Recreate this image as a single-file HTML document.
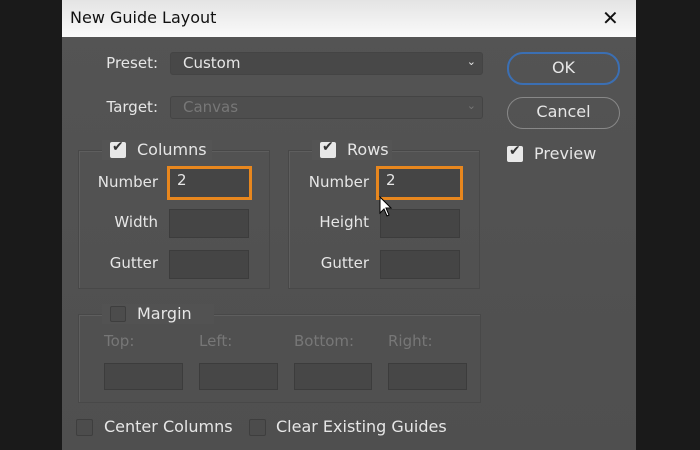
<!DOCTYPE html><html><head><style>
*{box-sizing:border-box}body{margin:0;width:700px;height:450px;background:#1a1a1a;position:relative;overflow:hidden;font-family:"DejaVu Sans","Liberation Sans",sans-serif;font-size:15px;color:#e6e6e6}
.a{position:absolute}
#dlg{left:62px;top:0;width:574px;height:450px;background:linear-gradient(#545454,#4f4f4f)}
#tb{left:62px;top:0;width:574px;height:37px;background:linear-gradient(#e4e4e4,#fafafa);color:#111;font-size:16px}
.lbl{text-align:right;width:120px}
.sel{background:#484848;border:1px solid #444;border-radius:3px;height:23px;padding:1px 12px}
.inp{background:#454545;border:1px solid #3c3c3c;width:80px;height:29px}
.or{border:3px solid #e8871e;padding:2px 7px}
.grp{border:1px solid #484848;box-shadow:inset 1px 1px 0 #5e5e5e}
.cb{width:16px;height:16px;border-radius:2px}
.on{background:#e8e8e8}
.off{border:1.5px solid #3e3e3e;background:#4c4c4c}
.btn{border-radius:16px;text-align:center;line-height:28px;font-size:16px}
.dim{color:#777}
</style></head><body>
<div id="dlg" class="a"></div>
<div id="tb" class="a"><span class="a" style="left:8px;top:8px">New Guide Layout</span><span class="a" style="left:540px;top:6px;font-size:20px">✕</span></div>

<div class="a lbl" style="left:38px;top:54px">Preset:</div>
<div class="a sel" style="left:170px;top:52px;width:313px">Custom<span class="a" style="right:6px;top:2px;font-size:11px">⌄</span></div>
<div class="a lbl" style="left:38px;top:98px">Target:</div>
<div class="a sel dim" style="left:170px;top:96px;width:313px;background:#4e4e4e">Canvas<span class="a" style="right:6px;top:2px;font-size:11px">⌄</span></div>

<div class="a btn" style="left:507px;top:52px;width:113px;height:33px;border:2.5px solid #3b6fb3">OK</div>
<div class="a btn" style="left:507px;top:97px;width:113px;height:32px;border:1.5px solid #888">Cancel</div>
<div class="a cb on" style="left:507px;top:146px"></div><span class="a" style="left:509px;top:143px;color:#333;font-size:14px">✔</span>
<span class="a" style="left:534px;top:144px;font-size:16px">Preview</span>

<div class="a grp" style="left:78px;top:150px;width:192px;height:139px"></div>
<div class="a" style="left:102px;top:140px;width:110px;height:20px;background:#545454"></div>
<div class="a cb on" style="left:110px;top:142px"></div><span class="a" style="left:112px;top:139px;color:#333;font-size:14px">✔</span>
<span class="a" style="left:137px;top:140px;font-size:16px">Columns</span>
<div class="a lbl" style="left:38px;top:173px">Number</div><div class="a inp or" style="left:167px;top:166px;width:85px;height:34px">2</div>
<div class="a lbl" style="left:38px;top:213px">Width</div><div class="a inp" style="left:169px;top:209px"></div>
<div class="a lbl" style="left:38px;top:254px">Gutter</div><div class="a inp" style="left:169px;top:250px"></div>

<div class="a grp" style="left:288px;top:150px;width:192px;height:139px"></div>
<div class="a" style="left:312px;top:140px;width:80px;height:20px;background:#545454"></div>
<div class="a cb on" style="left:320px;top:142px"></div><span class="a" style="left:322px;top:139px;color:#333;font-size:14px">✔</span>
<span class="a" style="left:347px;top:140px;font-size:16px">Rows</span>
<div class="a lbl" style="left:249px;top:173px">Number</div><div class="a inp or" style="left:376px;top:166px;width:87px;height:34px">2</div>
<div class="a lbl" style="left:249px;top:213px">Height</div><div class="a inp" style="left:380px;top:209px"></div>
<div class="a lbl" style="left:249px;top:254px">Gutter</div><div class="a inp" style="left:380px;top:250px"></div>
<svg class="a" style="left:379px;top:196px" width="14" height="22"><path d="M1 1 L1 17 L5 13 L8 20 L10 19 L7 12 L12 12 Z" fill="#fff" stroke="#000"/></svg>

<div class="a grp" style="left:78px;top:314px;width:403px;height:89px"></div>
<div class="a" style="left:102px;top:304px;width:112px;height:20px;background:#525252"></div>
<div class="a cb off" style="left:110px;top:306px"></div>
<span class="a" style="left:137px;top:304px;font-size:16px">Margin</span>
<span class="a dim" style="left:104px;top:332px">Top:</span><span class="a dim" style="left:199px;top:332px">Left:</span><span class="a dim" style="left:294px;top:332px">Bottom:</span><span class="a dim" style="left:388px;top:332px">Right:</span>
<div class="a inp" style="left:104px;top:363px;width:79px;height:27px;background:#474747"></div>
<div class="a inp" style="left:199px;top:363px;width:79px;height:27px;background:#474747"></div>
<div class="a inp" style="left:294px;top:363px;width:78px;height:27px;background:#474747"></div>
<div class="a inp" style="left:388px;top:363px;width:79px;height:27px;background:#474747"></div>

<div class="a cb off" style="left:76px;top:419px;width:17px;height:17px"></div>
<span class="a" style="left:104px;top:417px;font-size:16px">Center Columns</span>
<div class="a cb off" style="left:249px;top:419px;width:17px;height:17px"></div>
<span class="a" style="left:276px;top:417px;font-size:16px">Clear Existing Guides</span>
</body></html>
